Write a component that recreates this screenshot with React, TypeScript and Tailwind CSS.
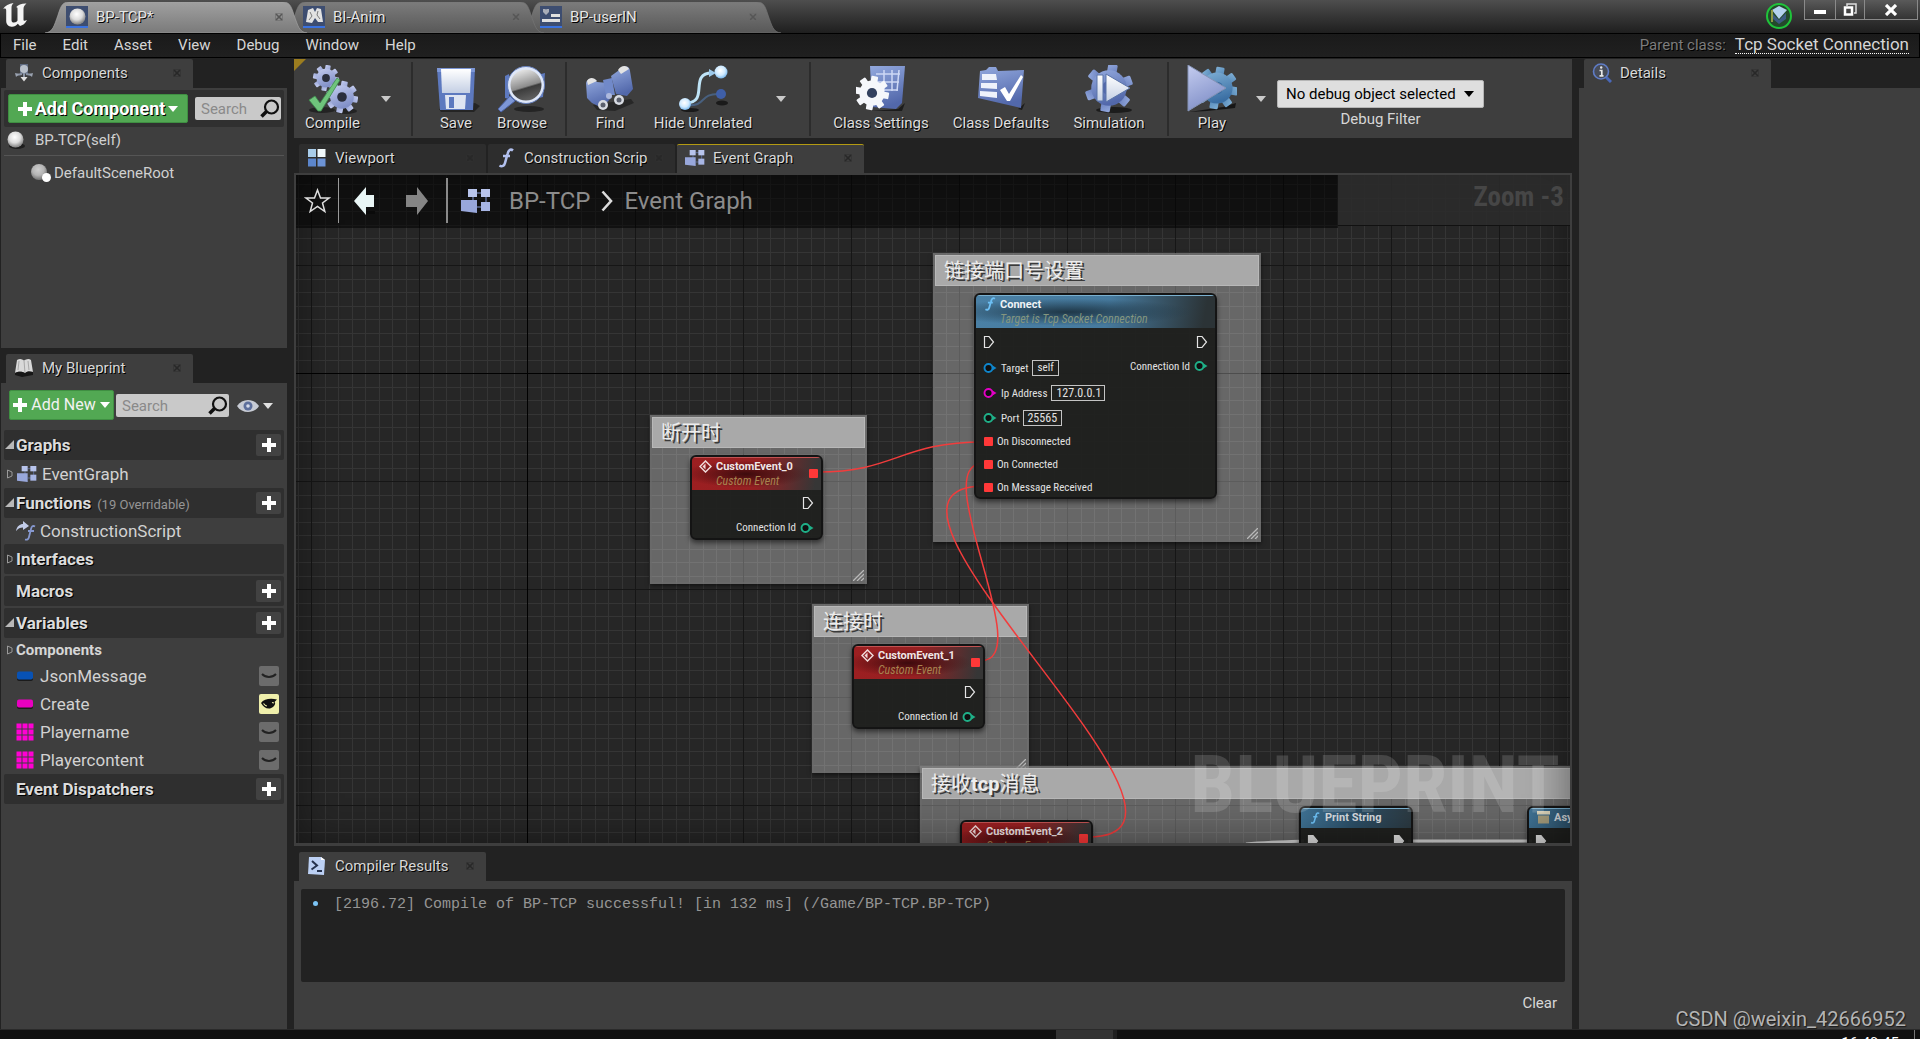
import type { ReactNode } from "react";

const shadow = "[text-shadow:1px_1px_0_#000]";

/* ---------- icons ---------- */

function Gear({ cx, cy, r, fill, hole = "#2b2f3d", teeth = 8 }: { cx: number; cy: number; r: number; fill: string; hole?: string; teeth?: number }) {
  return (
    <g fill={fill}>
      {Array.from({ length: teeth }).map((_, i) => (
        <rect
          key={i}
          x={cx - r * 0.2}
          y={cy - r}
          width={r * 0.4}
          height={r}
          rx={r * 0.06}
          transform={`rotate(${(360 / teeth) * i + 10} ${cx} ${cy})`}
        />
      ))}
      <circle cx={cx} cy={cy} r={r * 0.74} />
      <circle cx={cx} cy={cy} r={r * 0.3} fill={hole} />
    </g>
  );
}

function Defs() {
  return (
    <svg className="absolute h-0 w-0" aria-hidden="true">
      <defs>
        <linearGradient id="steel" x1="0" y1="0" x2="0.4" y2="1">
          <stop offset="0" stopColor="#c5cdf0" />
          <stop offset="1" stopColor="#8190c8" />
        </linearGradient>
        <linearGradient id="blue" x1="0" y1="0" x2="0.3" y2="1">
          <stop offset="0" stopColor="#93a9de" />
          <stop offset="1" stopColor="#5268ab" />
        </linearGradient>
        <linearGradient id="cyan" x1="0" y1="0" x2="0.3" y2="1">
          <stop offset="0" stopColor="#7fb0d6" />
          <stop offset="1" stopColor="#3a6ea3" />
        </linearGradient>
        <linearGradient id="white" x1="0" y1="0" x2="0" y2="1">
          <stop offset="0" stopColor="#ffffff" />
          <stop offset="1" stopColor="#c4cfe4" />
        </linearGradient>
        <radialGradient id="ball" cx="0.45" cy="0.35" r="0.6">
          <stop offset="0" stopColor="#ffffff" />
          <stop offset="0.6" stopColor="#dcdcdc" />
          <stop offset="1" stopColor="#8f8f8f" />
        </radialGradient>
        <radialGradient id="glow" cx="0.45" cy="0.4" r="0.6">
          <stop offset="0" stopColor="#ffffff" />
          <stop offset="0.6" stopColor="#cfeaff" />
          <stop offset="1" stopColor="#79b8ee" />
        </radialGradient>
        <linearGradient id="lens" x1="0.3" y1="0" x2="0.6" y2="1">
          <stop offset="0" stopColor="#f2f2f2" />
          <stop offset="0.55" stopColor="#8c8c8c" />
          <stop offset="0.6" stopColor="#3c3c3c" />
          <stop offset="1" stopColor="#666666" />
        </linearGradient>
        <linearGradient id="tabOn" x1="0" y1="0" x2="0" y2="1">
          <stop offset="0" stopColor="#a0a0a0" />
          <stop offset="1" stopColor="#7a7a7a" />
        </linearGradient>
        <linearGradient id="tabOff" x1="0" y1="0" x2="0" y2="1">
          <stop offset="0" stopColor="#7c7c7c" />
          <stop offset="1" stopColor="#585858" />
        </linearGradient>
      </defs>
    </svg>
  );
}

function UnrealLogo() {
  return (
    <svg width="26" height="26" viewBox="0 0 26 26" fill="#f4f4f4">
      <path d="M1 7C3 4 7 1.500 11.500 1 10 2.500 9.500 4 9.500 6V18C9.500 20 10.500 20.500 12 20.500 13.500 20.500 15 19.500 15.500 18.500V6.500C15.500 5.500 15 5 14 5.200 16 3 20 1.200 24.500 1.500 22.500 3 21.500 4.500 21.500 7V17.500C21.500 19 22.500 19.300 25 18 23.500 21.500 20.500 23.500 18 24L15.800 21.800C14 24 12 25 9.500 24.800 6.500 24.500 4.200 22.500 4.200 19V8.500C4.200 6.500 3 6 1 7Z" />
    </svg>
  );
}

function CompileIcon() {
  return (
    <svg width="50" height="50" viewBox="0 0 50 50">
      <ellipse cx="14" cy="45" rx="13" ry="3" fill="#1d1d1d" opacity=".8" />
      <ellipse cx="38" cy="46" rx="11" ry="3" fill="#1d1d1d" opacity=".8" />
      <Gear cx={18} cy={13} r={13} fill="url(#steel)" />
      <Gear cx={34} cy={32} r={16} fill="url(#steel)" />
      <path d="M1 35 7 31 12 38 29 13 32 15 13 46 10 46Z" fill="#6fc47c" stroke="#3d8a4c" strokeWidth=".8" />
    </svg>
  );
}

function SaveIcon() {
  return (
    <svg width="50" height="50" viewBox="0 0 50 50">
      <path d="M8 44 44 38 49 41 43 47 10 47Z" fill="#1e1e1e" opacity=".8" />
      <path d="M6 3H44L42 45H9Z" fill="#5d79bf" />
      <path d="M6 3H44L43.800 7H6.200Z" fill="#7d97d6" />
      <path d="M10 4H40L39 28H11Z" fill="url(#white)" />
      <path d="M14 30H35L34 44H15Z" fill="#dfe5f2" />
      <rect x="18" y="32" width="5" height="11" fill="#5d79bf" />
    </svg>
  );
}

function BrowseIcon() {
  return (
    <svg width="50" height="50" viewBox="0 0 50 50">
      <ellipse cx="32" cy="44" rx="15" ry="3" fill="#1e1e1e" opacity=".8" />
      <path d="M8 11 12 9V34L8 33Z" fill="#5d79bf" />
      <path d="M44 9 48 8 46 32 42 33Z" fill="#5d79bf" />
      <path d="M13 31 18 36 4 47 1 44Z" fill="#7d97d6" stroke="#4d64a6" />
      <circle cx="29" cy="20" r="17" fill="url(#lens)" stroke="#dfe7f8" strokeWidth="3" />
      <circle cx="29" cy="20" r="18.500" fill="none" stroke="#6680bd" strokeWidth="1" />
    </svg>
  );
}

function FindIcon() {
  return (
    <svg width="50" height="50" viewBox="0 0 50 50">
      <path d="M8 40 46 34 49 38 30 46 12 45Z" fill="#1e1e1e" opacity=".7" />
      <path d="M1 18C2 13 8 13 12 17L23 18 25 34 17 43 7 38 2 33Z" fill="url(#blue)" />
      <path d="M26 11 37 3C41 0 45 2 45 6L48 24 42 31 31 29Z" fill="url(#blue)" />
      <path d="M18 15 27 13 30 30 21 30Z" fill="#7189c9" />
      <path d="M2 16C4 12 9 12 12 16L3 20Z" fill="#e4e4e4" />
      <path d="M33 5C36 0 42 0 44 4L36 9Z" fill="#e4e4e4" />
      <circle cx="18" cy="40" r="5" fill="#d8dbe2" />
      <circle cx="18" cy="40" r="2.500" fill="#5a5f6c" />
      <circle cx="34" cy="35" r="5" fill="#d8dbe2" />
      <circle cx="34" cy="35" r="2.500" fill="#5a5f6c" />
      <circle cx="24" cy="31" r="3" fill="#aeb9dd" />
    </svg>
  );
}

function HideIcon() {
  return (
    <svg width="50" height="50" viewBox="0 0 50 50">
      <ellipse cx="44" cy="38" rx="6" ry="2.500" fill="#1a1a1a" />
      <ellipse cx="12" cy="45" rx="9" ry="2" fill="#1a1a1a" />
      <path d="M8 40C30 42 20 28 42 29" fill="none" stroke="#48607f" strokeWidth="2" />
      <circle cx="43" cy="29" r="5" fill="#3f5fa8" />
      <path d="M8 38C32 38 10 8 34 8" fill="none" stroke="#bfe4f7" strokeWidth="3" />
      <path d="M31 4 38 8 31 12Z" fill="#9cc9ea" />
      <circle cx="7" cy="39" r="6" fill="url(#glow)" />
      <circle cx="43" cy="7" r="6.500" fill="url(#glow)" />
    </svg>
  );
}

function ClassSettingsIcon() {
  return (
    <svg width="50" height="50" viewBox="0 0 50 50">
      <path d="M14 46 42 44 49 38 46 46Z" fill="#1c1c1c" />
      <path d="M14 1H49L46 38 40 44 16 42Z" fill="url(#blue)" />
      <path d="M20 9H44M19 17H43M28 5V26M36 5V26M43 5 41 26M28 25H42" fill="none" stroke="#cdd8f5" strokeWidth="1.500" />
      <Gear cx={16} cy={28} r={17} fill="#f5f7fb" hole="#33415f" />
    </svg>
  );
}

function ClassDefaultsIcon() {
  return (
    <svg width="50" height="50" viewBox="0 0 50 50">
      <path d="M8 36 46 45 49 38 42 44Z" fill="#1c1c1c" />
      <path d="M10 5 13 2H20L22 6 48 5 45 43 2 33 4 6Z" fill="url(#blue)" />
      <path d="M6 9 20 9 21 15 6 15ZM5 18 21 18 21 24 5 23ZM4 26 21 27 21 33 4 31Z" fill="#eef2fb" />
      <path d="M24 25 29 22 33 29 45 10 47 12 34 36 31 36Z" fill="#ffffff" />
    </svg>
  );
}

function SimulationIcon() {
  return (
    <svg width="50" height="50" viewBox="0 0 50 50">
      <ellipse cx="30" cy="45" rx="18" ry="3" fill="#1c1c1c" />
      <Gear cx={25} cy={23} r={24} fill="url(#blue)" hole="#5268ab" teeth={6} />
      <path d="M13 10H19V36H13Z" fill="url(#white)" stroke="#5a74a8" />
      <path d="M22 9 46 23 22 37Z" fill="url(#white)" stroke="#5a74a8" />
    </svg>
  );
}

function PlayIcon() {
  return (
    <svg width="50" height="50" viewBox="0 0 50 50">
      <path d="M2 47 36 42 49 38 48 43 20 46Z" fill="#161616" />
      <Gear cx={30} cy={23} r={21} fill="url(#cyan)" hole="#3a6ea3" />
      <path d="M1 0 39 23 1 46Z" fill="url(#steel)" stroke="#8593b5" />
    </svg>
  );
}

function GraphIcon({ size = 20 }: { size?: number }) {
  return (
    <svg width={size} height={size} viewBox="0 0 30 26" className="shrink-0">
      <path d="M12 9V15M25 8V17M16 5H22M16 19H22" stroke="#5b6a93" strokeWidth="1.500" />
      <rect x="7" y="1" width="9" height="8" fill="#b8c4ec" />
      <rect x="20" y="1" width="9" height="8" fill="#b8c4ec" />
      <path d="M0 12H16V25L0 23Z" fill="#98a7db" />
      <rect x="20" y="14" width="9" height="9" fill="#a7b5e4" />
    </svg>
  );
}

function ViewportIcon() {
  return (
    <svg width="20" height="20" viewBox="0 0 20 20">
      <rect x="1" y="1" width="8" height="8" fill="#a9cdea" />
      <rect x="10.500" y="1" width="8" height="8" fill="#f0f8fb" />
      <rect x="1" y="10.500" width="8" height="8" fill="#5c86cc" />
      <rect x="10.500" y="10.500" width="8" height="8" fill="#6c93d6" />
    </svg>
  );
}

function FnIcon({ color = "#b2c0ee", size = 20 }: { color?: string; size?: number }) {
  return (
    <svg width={size} height={size} viewBox="0 0 20 20" className="shrink-0">
      <path d="M17 2.500C14.500 .5 12.500 2 11.500 6L9 15C8.300 18 6 19 3.500 17.500M7 8H14" fill="none" stroke={color} strokeWidth="2.600" />
    </svg>
  );
}

function ConstructIcon() {
  return (
    <svg width="20" height="20" viewBox="0 0 20 20" className="shrink-0">
      <path d="M0 10C1 5 4 3 7 3V0L13 5 7 9V6.500C4 6.500 2 7.500 0 10Z" fill="#c3cde9" />
      <path d="M19 5.500C16.500 4 15.500 6 15 8L13 16C12.500 18.500 11 19 9 18.500M12 10H18" fill="none" stroke="#8698cf" strokeWidth="1.800" />
    </svg>
  );
}

function ComponentsIcon() {
  return (
    <svg width="20" height="20" viewBox="0 0 20 20">
      <path d="M6 1H14V11H6Z" fill="#5e6a80" />
      <circle cx="10" cy="6" r="4" fill="#b9c0ca" />
      <path d="M10 10V15M2 12 8 11M18 12 12 11" stroke="#8992a3" strokeWidth="2" />
      <path d="M6.500 14H13.500L10 18.500Z" fill="#e0e0e0" />
      <path d="M1 10 5 11 2 14ZM19 10 15 11 18 14Z" fill="#9aa2b0" />
    </svg>
  );
}

function BookIcon() {
  return (
    <svg width="20" height="20" viewBox="0 0 20 20">
      <path d="M1 14 19 13 19 17 8 19 1 17Z" fill="#171717" />
      <path d="M3 2C6 0 8 1 10 2.500 12 1 15 0 17 2L19 14C16 13 13 13 11 15 8 13 4 13 1 15Z" fill="#d9d9d9" />
      <path d="M10 2.500 11 15M5 3 4 12M14 3 15 12" stroke="#9b9b9b" strokeWidth=".8" />
    </svg>
  );
}

function DetailsIcon() {
  return (
    <svg width="20" height="20" viewBox="0 0 20 20">
      <path d="M13 13 19 19" stroke="#4a68b8" strokeWidth="3" />
      <circle cx="9" cy="8.500" r="7.500" fill="#474c58" stroke="#5f7cc6" strokeWidth="1.600" />
      <path d="M7.500 7.500H9.800V12.500M7.500 12.800H11.500" fill="none" stroke="#e8e8e8" strokeWidth="1.700" />
      <circle cx="9.200" cy="4.500" r="1.200" fill="#e8e8e8" />
    </svg>
  );
}

function CompilerIcon() {
  return (
    <svg width="20" height="20" viewBox="0 0 20 20">
      <path d="M2 1H14L18 4 17 19 1 18Z" fill="#bcd0f4" />
      <path d="M14 1 18 4H14Z" fill="#ffffff" />
      <path d="M5 5 10 9.500 4.500 13.500M10 15H15" fill="none" stroke="#26334f" strokeWidth="2" />
    </svg>
  );
}

function SearchIcon() {
  return (
    <svg width="20" height="20" viewBox="0 0 20 20" className="pointer-events-none absolute top-[2px] right-px">
      <circle cx="11.500" cy="8" r="6.500" fill="none" stroke="#111" strokeWidth="2.200" />
      <path d="M6.500 12.500 1.500 17.500" stroke="#111" strokeWidth="3.600" />
    </svg>
  );
}

function Caret({ color = "#c9c9c9" }: { color?: string }) {
  return (
    <svg width="10" height="6" viewBox="0 0 10 6" className="shrink-0">
      <path d="M0 0H10L5 6Z" fill={color} />
    </svg>
  );
}

function Plus() {
  return (
    <svg width="14" height="14" viewBox="0 0 14 14" className="shrink-0">
      <path d="M5 0H9V5H14V9H9V14H5V9H0V5H5Z" fill="#fff" />
    </svg>
  );
}

function CloseMark({ light = false }: { light?: boolean }) {
  return (
    <svg width="8" height="8" viewBox="0 0 8 8">
      <path d="M1 1 7 7M7 1 1 7" stroke={light ? "#565656" : "#282828"} strokeWidth="1.600" />
      <path d="M.5.5H7.500V7.500H.5Z" fill="none" stroke={light ? "#6a6a6a" : "#303030"} strokeWidth=".6" />
    </svg>
  );
}

/* ---------- title bar ---------- */

function WindowTab({ label, icon, active, order }: { label: string; icon: ReactNode; active?: boolean; order: string }) {
  return (
    <div className={`relative -mr-[25px] flex h-[31px] w-[262px] items-center pr-6 pb-[2px] pl-[21px] ${order}`}>
      <svg className="absolute inset-0" width="262" height="31" viewBox="0 0 262 31">
        <path
          d="M0 31C8 30 9 24 13 13 16 3 18 0 24 0H238C244 0 246 3 249 13 253 24 254 30 262 31Z"
          fill={active ? "url(#tabOn)" : "url(#tabOff)"}
          stroke={active ? "#a8a8a8" : "#777"}
          strokeWidth=".6"
        />
      </svg>
      <a href="#" className={`relative flex flex-1 items-center gap-2 text-[#e6e6e6] ${shadow}`}>
        {icon}
        {label}
      </a>
      <button className="relative" aria-label={`Close ${label}`}>
        <CloseMark light />
      </button>
    </div>
  );
}

function AssetIcon({ children }: { children: ReactNode }) {
  return (
    <svg width="22" height="22" viewBox="0 0 22 22">
      <rect width="22" height="22" fill="#3d4d70" />
      {children}
      <rect y="20" width="22" height="2" fill="#3a72e0" />
    </svg>
  );
}

function TitleBar() {
  return (
    <header className="flex h-[33px] items-start bg-linear-to-b from-[#4e4e4e] to-[#1f1f1f]">
      <div className="w-[45px] shrink-0 pt-[2px] pl-[2px]">
        <UnrealLogo />
      </div>
      <nav className="flex pt-[2px]">
        <WindowTab
          label="BP-TCP*"
          active
          order="z-30"
          icon={
            <AssetIcon>
              <circle cx="11.500" cy="10.500" r="8" fill="url(#ball)" />
            </AssetIcon>
          }
        />
        <WindowTab
          label="BI-Anim"
          order="z-20"
          icon={
            <AssetIcon>
              <path d="M3 16 5 4 10 2 12 6 14 2 18 3 20 16 15 16 12 12 9 17Z" fill="#e2e2e2" />
              <path d="M7 6 9 10 6 14M15 5 14 9 17 13" fill="none" stroke="#7b7b7b" />
            </AssetIcon>
          }
        />
        <WindowTab
          label="BP-userIN"
          order="z-10"
          icon={
            <AssetIcon>
              <path d="M3 3H5.500L6 4 6.500 3H9V6L6 9 3 6Z" fill="#a9adb8" />
              <rect x="11" y="8" width="9" height="3" fill="#e0e0e0" />
              <rect x="2" y="13" width="18" height="3" fill="#e0e0e0" />
            </AssetIcon>
          }
        />
      </nav>
      <div className="ml-auto flex items-start pr-[2px]">
        <svg width="28" height="28" viewBox="0 0 28 28" className="mt-[2px] mr-[11px]">
          <circle cx="14" cy="14" r="12" fill="#234a2a" stroke="#1fc43a" strokeWidth="2" />
          <path d="M7 11 14 18 21 11V17L14 22 8 17Z" fill="#3d5a80" />
          <path d="M7 8 14 4 22 8 14 17Z" fill="#b5d2ee" />
          <path d="M7 8V20" stroke="#8f9a45" strokeWidth="2" />
        </svg>
        <div className="flex divide-x divide-[#8a8a8a] border border-t-0 border-[#8a8a8a] bg-linear-to-b from-[#5a5a5a] to-[#343434]">
          <button className="grid h-[19px] w-[31px] place-items-center" aria-label="Minimize">
            <svg width="12" height="12">
              <rect y="6" width="12" height="4" fill="#fff" />
            </svg>
          </button>
          <button className="grid h-[19px] w-[29px] place-items-center" aria-label="Restore">
            <svg width="14" height="14">
              <path d="M4 3V1H13V10H11" fill="none" stroke="#ddd" strokeWidth="1.500" />
              <rect x="2" y="4.500" width="7" height="7" fill="none" stroke="#fff" strokeWidth="2.500" />
            </svg>
          </button>
          <button className="grid h-[19px] w-[52px] place-items-center" aria-label="Close window">
            <svg width="12" height="12">
              <path d="M1 1 11 11M11 1 1 11" stroke="#fff" strokeWidth="3.200" />
            </svg>
          </button>
        </div>
      </div>
    </header>
  );
}

function MenuBar() {
  const items = ["File", "Edit", "Asset", "View", "Debug", "Window", "Help"];
  return (
    <div className="flex h-[25px] items-center justify-between border border-black bg-linear-to-b from-[#1a1a1a] to-[#202020] pr-[10px] pb-[2px] pl-3">
      <nav className="flex gap-[26px] text-[#d6d6d6]">
        {items.map((item) => (
          <button key={item}>{item}</button>
        ))}
      </nav>
      <div className="flex items-center gap-[9px]">
        <span className={`text-[#7c7c7c] ${shadow}`}>Parent class:</span>
        <a href="#" className="border-b border-dotted border-white text-[17px] leading-[18px] text-[#d6d6d6]">
          Tcp Socket Connection
        </a>
      </div>
    </div>
  );
}

/* ---------- docked panels ---------- */

function PanelTab({ label, icon, tone = "on" }: { label: string; icon: ReactNode; tone?: "on" | "off" | "current" }) {
  const tones = {
    on: "bg-[#3e3e3e]",
    off: "bg-[#2d2d2d]",
    current: "bg-[#3e3e3e] border-t border-[#b39a12]",
  };
  return (
    <div className={`flex h-[29px] w-[187px] items-center gap-2 rounded-t-xs pr-3 pb-[2px] pl-2 ${tones[tone]}`}>
      {icon}
      <span className={`flex-1 overflow-hidden whitespace-nowrap text-[#d8d8d8] ${shadow}`}>{label}</span>
      <button aria-label={`Close ${label}`}>
        <CloseMark />
      </button>
    </div>
  );
}

function SearchBox({ label, width }: { label: string; width: string }) {
  return (
    <div className={`relative h-[23px] ${width}`}>
      <input
        type="text"
        aria-label={label}
        placeholder="Search"
        className="h-full w-full rounded-xs bg-[#c9c9c9] pr-5 pl-[6px] text-black placeholder-[#8a8a8a]"
      />
      <SearchIcon />
    </div>
  );
}

function ComponentsPanel() {
  return (
    <section>
      <div className="pl-[5px]">
        <PanelTab label="Components" icon={<ComponentsIcon />} />
      </div>
      <div className="h-[260px] bg-[#3e3e3e] px-[3px] pt-[2px]">
        <div className="flex h-[37px] items-center justify-between rounded-xs bg-[#303030] pr-[3px] pl-1">
          <button className={`flex h-[29px] w-[180px] items-center justify-center gap-[3px] rounded-xs border border-[#3f8f42] bg-[#52a853] text-lg font-bold text-white ${shadow}`}>
            <Plus />
            Add Component
            <Caret color="#fff" />
          </button>
          <SearchBox label="Search components" width="w-[86px]" />
        </div>
        <div className="flex h-[29px] items-center gap-[10px] border-b border-[#555] pb-[2px] pl-[3px] text-[#d0d0d0]">
          <svg width="18" height="20" viewBox="0 0 18 20">
            <ellipse cx="10" cy="16" rx="8" ry="3" fill="#1e1e1e" />
            <circle cx="8.500" cy="9.500" r="8" fill="url(#ball)" />
          </svg>
          BP-TCP(self)
        </div>
        <div className="flex h-[34px] items-center gap-[3px] pl-[27px] text-[#d0d0d0]">
          <svg width="20" height="20" viewBox="0 0 20 20">
            <circle cx="8" cy="9" r="8" fill="url(#ball)" opacity=".75" />
            <circle cx="15.500" cy="14.500" r="4.500" fill="#fff" />
          </svg>
          DefaultSceneRoot
        </div>
      </div>
    </section>
  );
}

function Arrow({ open }: { open?: boolean }) {
  return (
    <svg width="10" height="10" viewBox="0 0 10 10" className="shrink-0">
      {open ? <path d="M9 0V9H0Z" fill="#b8b8b8" /> : <path d="M2.500 1V9L7 7V3Z" fill="none" stroke="#9a9a9a" />}
    </svg>
  );
}

function Section({ label, note, open, closed, add = true }: { label: string; note?: string; open?: boolean; closed?: boolean; add?: boolean }) {
  return (
    <div className="flex h-[30px] items-center rounded-xs bg-[#2f2f2f] pr-[3px] pl-px">
      <span className="w-[11px]">{(open || closed) && <Arrow open={open} />}</span>
      <h3 className={`text-[17px] font-bold text-[#dcdcdc] ${shadow}`}>{label}</h3>
      {note && <span className="mt-1 ml-[6px] text-[13px] text-[#959595]">{note}</span>}
      {add && (
        <button className="ml-auto grid h-[22px] w-[25px] place-items-center rounded-xs bg-[#424242]" aria-label={`Add to ${label}`}>
          <Plus />
        </button>
      )}
    </div>
  );
}

function VariableRow({ name, kind, visible }: { name: string; kind: "object" | "string" | "array"; visible?: boolean }) {
  return (
    <div className="flex h-[28px] items-center gap-[6px] pr-[5px] pb-px pl-3 text-[17px] text-[#d2d2d2]">
      {kind === "array" ? (
        <svg width="18" height="18" viewBox="0 0 18 18" fill="#ff00d4">
          {[0, 6, 12].map((x) => [0, 6, 12].map((y) => <rect key={`${x}-${y}`} x={x + 0.5} y={y + 0.5} width="5" height="5" />))}
        </svg>
      ) : (
        <svg width="18" height="12" viewBox="0 0 18 12">
          <rect x="1" y="4" width="16" height="7" rx="2" fill="#1b1b1b" />
          <rect x="1" y="1.500" width="16" height="8" rx="2" fill={kind === "object" ? "#0852b5" : "#e900c0"} />
        </svg>
      )}
      <span className="flex-1">{name}</span>
      <button
        aria-label={`Toggle visibility of ${name}`}
        className={`grid h-5 w-5 place-items-center rounded-xs ${visible ? "bg-[#efefab]" : "bg-[#6c6c6c]"}`}>
        {visible ? (
          <svg width="16" height="12" viewBox="0 0 16 12">
            <path d="M0 5C3 1 9 0 16 1.500L13.500 4C15 5 14 9 9 10.500 5 11 2 8.500 0 5Z" fill="#111" />
            <path d="M2.500 5.500C4 7.500 5 8 6 8M11 4.500 13 5" stroke="#efefab" strokeWidth="1.200" fill="none" />
          </svg>
        ) : (
          <svg width="16" height="8" viewBox="0 0 16 8">
            <path d="M1 2C5 6 11 6 15 2" fill="none" stroke="#222" strokeWidth="2" />
          </svg>
        )}
      </button>
    </div>
  );
}

function BlueprintPanel() {
  return (
    <section className="mt-[6px] flex flex-1 flex-col">
      <div className="pl-[5px]">
        <PanelTab label="My Blueprint" icon={<BookIcon />} />
      </div>
      <div className="flex-1 bg-[#3e3e3e] px-[3px]">
        <div className="flex h-[47px] items-start gap-[2px] pt-[7px] pl-[5px]">
          <button className="flex h-[30px] w-[105px] items-center justify-center gap-1 rounded-xs border border-[#3f8f42] bg-[#52a853] text-base text-[#f2f2f2]">
            <Plus />
            Add New
            <Caret color="#fff" />
          </button>
          <div className="mt-1">
            <SearchBox label="Search blueprint" width="w-[113px]" />
          </div>
          <button className="mt-2 ml-[6px] flex h-4 items-center gap-1" aria-label="View options">
            <svg width="22" height="14" viewBox="0 0 22 14">
              <path d="M0 7C5-1 17-1 22 7 17 15 5 15 0 7Z" fill="#c7cbd4" />
              <circle cx="11" cy="7" r="4.500" fill="#5d6f9c" />
              <circle cx="11" cy="7" r="1.800" fill="#d6dcec" />
            </svg>
            <Caret color="#e0e0e0" />
          </button>
        </div>
        <Section label="Graphs" open />
        <div className="flex h-[28px] items-center gap-[2px] pl-px text-[17px] text-[#d2d2d2]">
          <Arrow />
          <GraphIcon />
          <span className="ml-[3px]">EventGraph</span>
        </div>
        <Section label="Functions" note="(19 Overridable)" open />
        <div className="flex h-[26px] items-center gap-1 pl-3 text-[17px] text-[#d2d2d2]">
          <ConstructIcon />
          ConstructionScript
        </div>
        <div className="flex flex-col gap-[2px]">
          <Section label="Interfaces" closed add={false} />
          <Section label="Macros" />
          <Section label="Variables" open />
        </div>
        <div className="flex h-[24px] items-center pl-px">
          <span className="w-[11px]">
            <Arrow />
          </span>
          <h4 className="text-[15px] font-bold text-[#d6d6d6]">Components</h4>
        </div>
        <VariableRow name="JsonMessage" kind="object" />
        <VariableRow name="Create" kind="string" visible />
        <VariableRow name="Playername" kind="array" />
        <VariableRow name="Playercontent" kind="array" />
        <Section label="Event Dispatchers" />
      </div>
    </section>
  );
}

/* ---------- toolbar ---------- */

function ToolButton({ label, icon, width = "w-[66px]" }: { label: string; icon: ReactNode; width?: string }) {
  return (
    <button className={`flex h-[76px] flex-col items-center pt-1 text-[#dedede] ${width} ${shadow}`}>
      {icon}
      <span className="leading-4 whitespace-nowrap">{label}</span>
    </button>
  );
}

function ToolMenu({ label, width = "w-[30px]" }: { label: string; width?: string }) {
  return (
    <button className={`grid h-[76px] place-items-center ${width}`} aria-label={label}>
      <Caret />
    </button>
  );
}

const Divider = () => <div className="mx-[10px] h-[74px] w-[2px] bg-[#2c2c2c]" />;

function Toolbar() {
  return (
    <div className="relative flex h-[79px] items-center bg-[#3e3e3e]">
      <svg width="12" height="12" className="absolute top-0 left-0">
        <path d="M0 0H12L0 12Z" fill="#9c7d1f" />
      </svg>
      <ToolButton label="Compile" width="w-[77px]" icon={<CompileIcon />} />
      <ToolMenu label="Compile options" />
      <Divider />
      <ToolButton label="Save" icon={<SaveIcon />} />
      <ToolButton label="Browse" icon={<BrowseIcon />} />
      <Divider />
      <ToolButton label="Find" icon={<FindIcon />} />
      <ToolButton label="Hide Unrelated" width="w-[120px]" icon={<HideIcon />} />
      <ToolMenu label="Hide unrelated options" width="w-[36px]" />
      <Divider />
      <ToolButton label="Class Settings" width="w-[120px]" icon={<ClassSettingsIcon />} />
      <ToolButton label="Class Defaults" width="w-[120px]" icon={<ClassDefaultsIcon />} />
      <ToolButton label="Simulation" width="w-[96px]" icon={<SimulationIcon />} />
      <Divider />
      <ToolButton label="Play" icon={<PlayIcon />} />
      <ToolMenu label="Play options" width="w-[32px]" />
      <div className="flex flex-col items-center pt-3">
        <div className="relative">
          <select
            id="debug-filter"
            className="h-7 w-[207px] appearance-none rounded-xs border border-[#b5b5b5] bg-[#dedede] pl-2 text-black">
            <option>No debug object selected</option>
          </select>
          <span className="pointer-events-none absolute top-0 right-[10px] flex h-7 items-center">
            <Caret color="#000" />
          </span>
        </div>
        <label htmlFor="debug-filter" className="text-[#d6d6d6]">
          Debug Filter
        </label>
      </div>
    </div>
  );
}

/* ---------- graph ---------- */

const minor = [14, 27, 41, 54, 68, 81, 95];

function Grid() {
  return (
    <svg className="absolute inset-0 h-full w-full" shapeRendering="crispEdges">
      <defs>
        <pattern id="grid" x="15" y="90" width="108" height="108" patternUnits="userSpaceOnUse">
          <rect width="108" height="108" fill="#262626" />
          {minor.map((n) => (
            <g key={n} fill="#353535">
              <rect x={n} y="0" width="1" height="108" />
              <rect x="0" y={n} width="108" height="1" />
            </g>
          ))}
          <rect width="1" height="108" fill="#161616" />
          <rect width="108" height="1" fill="#161616" />
        </pattern>
      </defs>
      <rect width="100%" height="100%" fill="url(#grid)" />
      <rect x="231" width="1" height="100%" fill="#000" />
      <rect y="198" width="100%" height="1" fill="#000" />
    </svg>
  );
}

function CommentBox({ place, children }: { place: string; children: ReactNode }) {
  return (
    <div className={`absolute border-2 border-[#6a6a6a]/60 bg-white/30 shadow-[0_2px_4px_rgba(0,0,0,0.5)] ${place}`}>
      <div className="flex h-[31px] items-center border border-[#b8b8b8] bg-[#a9a9a9] pl-2 text-xl leading-7 text-[#ededed] [text-shadow:2px_2px_0_#3a3a3a]">
        {children}
      </div>
      <svg width="11" height="11" viewBox="0 0 11 11" className="absolute right-px bottom-px">
        <path d="M0 11 11 0M4 11 11 4M8 11 11 8" stroke="#b9b9b9" strokeWidth="1.300" />
      </svg>
    </div>
  );
}

function ExecPin({ filled }: { filled?: boolean }) {
  return (
    <svg width="12" height="14" viewBox="0 0 12 14" className="shrink-0">
      <path d="M1.500 1.500H6L10.500 7 6 12.500H1.500Z" fill={filled ? "#e4e4e4" : "none"} stroke="#e4e4e4" strokeWidth="1.200" />
    </svg>
  );
}

function DataPin({ color }: { color: string }) {
  return (
    <svg width="14" height="10" viewBox="0 0 14 10" className="shrink-0">
      <circle cx="5.500" cy="5" r="4" fill="#101010" stroke={color} strokeWidth="1.900" />
      <path d="M9.500 2.500 13.500 5 9.500 7.500Z" fill={color} />
    </svg>
  );
}

const DelegatePin = () => <span className="h-[9px] w-[9px] shrink-0 rounded-[1px] bg-[#ff3838]" />;

const nodeBox =
  "absolute overflow-hidden rounded-md border-2 border-[#141414] bg-[#1c1d1b]/95 text-[11px] leading-[15px] text-[#e2e2e2] shadow-[0_3px_5px_rgba(0,0,0,0.5)] [font-family:'Roboto_Condensed',Roboto,sans-serif]";
const nodeTitle = "font-bold whitespace-nowrap [font-family:Roboto,sans-serif]";

function EventNode({ name, place }: { name: string; place: string }) {
  return (
    <div className={`h-[85px] w-[133px] ${nodeBox} ${place}`}>
      <div className="relative flex h-[33px] items-start gap-1 border-t border-[#c25353] bg-[radial-gradient(ellipse_at_42%_50%,#3d0b0d_0%,transparent_60%),linear-gradient(100deg,#9c1f21_0%,#962022_50%,#363636_95%)] pt-px pl-[7px]">
        <svg width="13" height="13" viewBox="0 0 13 13" className="mt-px shrink-0">
          <path d="M6.500 1 12 6.500 6.500 12 1 6.500Z" fill="none" stroke="#f0dada" strokeWidth="1.500" />
          <path d="M6.500 3.500V9.500L3.500 6.500Z" fill="#f0dada" />
        </svg>
        <div>
          <p className={`text-[#f0e6e6] ${nodeTitle}`}>{name}</p>
          <p className="text-xs leading-[15px] text-[#a8834f] italic">Custom Event</p>
        </div>
        <span className="absolute top-[11px] right-[3px] flex">
          <DelegatePin />
        </span>
      </div>
      <div className="flex h-[26px] items-center justify-end pr-[7px]">
        <ExecPin />
      </div>
      <div className="flex h-[23px] items-center justify-end gap-1 pr-[7px]">
        Connection Id
        <DataPin color="#1fb088" />
      </div>
    </div>
  );
}

function ConnectNode() {
  return (
    <div className={`top-[118px] left-[678px] h-[206px] w-[243px] ${nodeBox}`}>
      <div className="flex h-[33px] items-start gap-[3px] border-t border-[#7ab0cf] bg-[radial-gradient(ellipse_at_38%_50%,#1f3747_0%,transparent_60%),linear-gradient(100deg,#4a80a5_0%,#467a9e_55%,#2b3336_95%)] pt-px pl-[7px]">
        <FnIcon color="#6dc0f5" size={14} />
        <div>
          <p className={`text-[#eef3f6] ${nodeTitle}`}>Connect</p>
          <p className="text-xs leading-[15px] text-[#84967f] italic">Target is Tcp Socket Connection</p>
        </div>
      </div>
      <div className="flex justify-between px-[7px]">
        <div>
          <div className="flex h-[28px] items-center">
            <ExecPin />
          </div>
          <div className="flex h-[24px] items-center gap-1">
            <DataPin color="#0f86cc" />
            Target
            <span className="h-4 border border-[#c4c4c4] px-1 leading-[14px]">self</span>
          </div>
          <div className="flex h-[26px] items-center gap-1">
            <DataPin color="#e300c4" />
            <label htmlFor="ip">Ip Address</label>
            <input id="ip" defaultValue="127.0.0.1" className="h-4 w-[54px] border border-[#c4c4c4] px-1 text-xs" />
          </div>
          <div className="flex h-[24px] items-center gap-1">
            <DataPin color="#1fb088" />
            <label htmlFor="port">Port</label>
            <input id="port" defaultValue="25565" className="h-4 w-[39px] border border-[#c4c4c4] px-[3px] text-xs" />
          </div>
          {["On Disconnected", "On Connected", "On Message Received"].map((name) => (
            <div key={name} className="flex h-[23px] items-center gap-1 pl-px">
              <DelegatePin />
              {name}
            </div>
          ))}
        </div>
        <div>
          <div className="flex h-[28px] items-center justify-end">
            <ExecPin />
          </div>
          <div className="flex h-[20px] items-center gap-1">
            Connection Id
            <DataPin color="#1fb088" />
          </div>
        </div>
      </div>
    </div>
  );
}

function CallNode({ name, icon, place, out }: { name: string; icon: ReactNode; place: string; out?: boolean }) {
  return (
    <div className={`h-[60px] w-[114px] ${nodeBox} ${place}`}>
      <div className="flex h-[20px] items-center gap-1 border-t border-[#7ab0cf] bg-linear-to-r from-[#3f7294] via-[#2b4e66] to-[#2c3a42] pb-[2px] pl-2">
        {icon}
        <p className={`text-[#d6dade] ${nodeTitle}`}>{name}</p>
      </div>
      <div className="flex h-[26px] items-center justify-between px-[6px]">
        <ExecPin filled />
        {out && <ExecPin filled />}
      </div>
    </div>
  );
}

function EventGraph() {
  return (
    <div className="relative flex-1 overflow-hidden border-2 border-b-[3px] border-[#3e3e3e] bg-[#262626]">
      <Grid />
      <CommentBox place="top-[78px] left-[637px] h-[289px] w-[328px]">链接端口号设置</CommentBox>
      <CommentBox place="top-[240px] left-[354px] h-[169px] w-[217px]">断开时</CommentBox>
      <CommentBox place="top-[429px] left-[516px] h-[169px] w-[217px]">连接时</CommentBox>
      <CommentBox place="top-[591px] left-[624px] h-[160px] w-[720px]">
        接收<b>tcp</b>消息
      </CommentBox>

      <svg className="absolute inset-0 h-full w-full" fill="none" strokeWidth="1.500">
        <path d="M522 297C600 297 604 267 688 267" stroke="#f23c3c" />
        <path d="M684 486C744 486 628 288 688 288" stroke="#f23c3c" />
        <path d="M792 662C955 662 526 311 688 311" stroke="#f23c3c" />
        <path d="M950 669C970 667 985 667 1008 666M1112 666H1236" stroke="#d8d8d8" strokeWidth="3" />
      </svg>

      <ConnectNode />
      <EventNode name="CustomEvent_0" place="top-[280px] left-[394px]" />
      <EventNode name="CustomEvent_1" place="top-[469px] left-[556px]" />
      <EventNode name="CustomEvent_2" place="top-[645px] left-[664px]" />
      <CallNode name="Print String" icon={<FnIcon color="#6dc0f5" size={12} />} place="top-[631px] left-[1003px]" out />
      <CallNode
        name="Async"
        place="top-[631px] left-[1231px]"
        icon={
          <svg width="13" height="13" viewBox="0 0 13 13" className="shrink-0">
            <rect width="13" height="3.500" fill="#d9d2b8" />
            <rect x="1" y="4.500" width="11" height="8" fill="#a59c7b" />
          </svg>
        }
      />

      <div className="pointer-events-none absolute inset-0 shadow-[inset_0_0_40px_rgba(0,0,0,0.45)]" />
      <p className="pointer-events-none absolute right-[10px] bottom-[10px] text-[80px] leading-[96px] font-bold text-white/15 [font-family:'Roboto_Condensed',Roboto,sans-serif]">
        BLUEPRINT
      </p>

      <div className="absolute inset-x-0 top-0 flex h-[53px] items-start">
        <div className="flex h-[53px] flex-1 items-center bg-black/55 pb-[2px] pl-2 text-2xl text-[#8c8c8c]">
          <button aria-label="Bookmark">
            <svg width="27" height="26" viewBox="0 0 27 26">
              <path d="M13.500 2 16.500 10H25L18.500 15 20.800 23.500 13.500 18.500 6.200 23.500 8.500 15 2 10H10.500Z" fill="none" stroke="#e0e0e0" strokeWidth="1.500" />
            </svg>
          </button>
          <span className="mx-[7px] h-[45px] w-px bg-[#9a9a9a]" />
          <button className="mx-2" aria-label="Back">
            <svg width="21" height="28" viewBox="0 0 21 28">
              <path d="M9 24H21V27H12Z" fill="#0a0a0a" />
              <path d="M0 14 12 0V8H20V20H12V28Z" fill="#e9f6f6" />
            </svg>
          </button>
          <button className="mx-[23px]" aria-label="Forward">
            <svg width="22" height="28" viewBox="0 0 22 28">
              <path d="M22 14 11 0V8H0V20H11V28Z" fill="#858585" />
            </svg>
          </button>
          <span className="mr-[13px] -ml-[5px] h-[45px] w-[2px] bg-[#8a8a8a]" />
          <GraphIcon size={30} />
          <span className="ml-[18px]">BP-TCP</span>
          <svg width="12" height="22" viewBox="0 0 12 22" className="mx-[11px]">
            <path d="M1.500 1.500 10 11 1.500 20.500" fill="none" stroke="#dcdcdc" strokeWidth="2.600" />
          </svg>
          <span>Event Graph</span>
        </div>
        <div className="flex h-[51px] w-[232px] justify-end border-b border-[#111] bg-[#2b2b2b]/90 pt-1 pr-[6px] text-[27px] leading-9 font-bold text-[#464646] [font-family:'Roboto_Condensed',Roboto,sans-serif]">
          Zoom -3
        </div>
      </div>
    </div>
  );
}

function CompilerResults() {
  return (
    <section className="mt-[6px]">
      <div className="pl-[5px]">
        <PanelTab label="Compiler Results" icon={<CompilerIcon />} />
      </div>
      <div className="bg-[#3e3e3e] px-[7px] pt-2 pb-[15px]">
        <div className="flex h-[93px] items-start gap-4 rounded-xs bg-[#222] px-3 pt-[6px] text-[#959595] [font-family:'Liberation_Mono',monospace]">
          <span className="mt-[6px] h-[5px] w-[5px] rounded-full bg-[#7cc4f5]" />
          <p className="leading-5">[2196.72] Compile of BP-TCP successful! [in 132 ms] (/Game/BP-TCP.BP-TCP)</p>
        </div>
        <div className="flex justify-end pt-[10px] pr-2">
          <button className="text-[#d8d8d8]">Clear</button>
        </div>
      </div>
    </section>
  );
}

export default function App() {
  return (
    <div className="relative flex h-screen min-h-[900px] flex-col overflow-hidden bg-[#222] text-[15px] leading-[22px] [font-family:Roboto,'Noto_Sans_CJK_SC',sans-serif]">
      <Defs />
      <TitleBar />
      <MenuBar />
      <main className="flex min-h-0 flex-1 gap-[7px] pt-px">
        <aside className="flex w-[287px] shrink-0 flex-col pl-px">
          <ComponentsPanel />
          <BlueprintPanel />
        </aside>
        <div className="flex min-w-0 flex-1 flex-col">
          <Toolbar />
          <div className="mt-[6px] flex gap-[2px] pl-[5px]">
            <PanelTab label="Viewport" icon={<ViewportIcon />} tone="off" />
            <PanelTab label="Construction Script" icon={<FnIcon />} tone="off" />
            <PanelTab label="Event Graph" icon={<GraphIcon />} tone="current" />
          </div>
          <EventGraph />
          <CompilerResults />
        </div>
        <aside className="flex w-[341px] shrink-0 flex-col">
          <div className="pl-[5px]">
            <PanelTab label="Details" icon={<DetailsIcon />} />
          </div>
          <div className="flex flex-1 items-end justify-end bg-[#3e3e3e] pr-[14px]">
            <p className="text-xl leading-5 text-[#b4b4b4] [text-shadow:1px_1px_1px_#1a1a1a]">CSDN @weixin_42666952</p>
          </div>
        </aside>
      </main>
      <footer className="flex h-[10px] items-start overflow-hidden border-t border-[#2a2a2a] bg-[#101010]">
        <div className="ml-[55%] h-[10px] w-[61px] border-r-4 border-[#1f1f1f] bg-[#333]" />
        <time className="ml-auto pt-[2px] pr-[15px] text-white">16:49:45</time>
        <span className="mr-[5px] h-[10px] w-px bg-[#777]" />
      </footer>
    </div>
  );
}
